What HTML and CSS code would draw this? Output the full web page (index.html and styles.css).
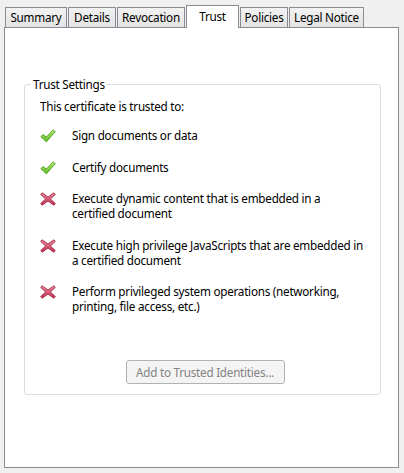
FILE: index.html
```html
<!DOCTYPE html>
<html>
<head>
<meta charset="utf-8">
<link rel="stylesheet" href="styles.css">
</head>
<body>
<div class="dialog">
  <div class="tabs">
    <div class="tab t-summary">Summary</div>
    <div class="tab t-details">Details</div>
    <div class="tab t-revocation">Revocation</div>
    <div class="tab tab-active t-trust">Trust</div>
    <div class="tab t-policies">Policies</div>
    <div class="tab t-legal">Legal Notice</div>
  </div>
  <div class="panel">
    <fieldset class="group">
      <legend class="group-title">Trust Settings</legend>
      <div class="intro">This certificate is trusted to:</div>
      <ul class="perms">
        <li class="perm">
          <svg class="icon" viewBox="0 0 16 14" width="16" height="14">
            <defs>
              <linearGradient id="gchk" x1="0" y1="0" x2="0" y2="1">
                <stop offset="0" stop-color="#bff07a"/>
                <stop offset="1" stop-color="#5cb623"/>
              </linearGradient>
            </defs>
            <path d="M0.8 7.6 L3.4 5.4 L6.2 8.2 L13.2 0.9 L15.3 2.6 L6.4 12.8 Z" fill="url(#gchk)" stroke="#449a18" stroke-width="0.9" stroke-linejoin="round"/>
          </svg>
          <span class="perm-text">Sign documents or data</span>
        </li>
        <li class="perm">
          <svg class="icon" viewBox="0 0 16 14" width="16" height="14">
            <path d="M0.8 7.6 L3.4 5.4 L6.2 8.2 L13.2 0.9 L15.3 2.6 L6.4 12.8 Z" fill="url(#gchk)" stroke="#449a18" stroke-width="0.9" stroke-linejoin="round"/>
          </svg>
          <span class="perm-text">Certify documents</span>
        </li>
        <li class="perm">
          <svg class="icon" viewBox="0 0 16 14" width="16" height="14">
            <defs>
              <linearGradient id="gx" x1="0" y1="0" x2="0" y2="1">
                <stop offset="0" stop-color="#f08aa0"/>
                <stop offset="1" stop-color="#c0304e"/>
              </linearGradient>
            </defs>
            <path d="M2.2 0.8 L8 5 L13.8 0.8 L15.3 2.4 L10.4 7 L15.3 11.6 L13.8 13.2 L8 9 L2.2 13.2 L0.7 11.6 L5.6 7 L0.7 2.4 Z" fill="url(#gx)" stroke="#a02844" stroke-width="0.9" stroke-linejoin="round"/>
          </svg>
          <span class="perm-text">Execute dynamic content that is embedded in a certified document</span>
        </li>
        <li class="perm">
          <svg class="icon" viewBox="0 0 16 14" width="16" height="14">
            <path d="M2.2 0.8 L8 5 L13.8 0.8 L15.3 2.4 L10.4 7 L15.3 11.6 L13.8 13.2 L8 9 L2.2 13.2 L0.7 11.6 L5.6 7 L0.7 2.4 Z" fill="url(#gx)" stroke="#a02844" stroke-width="0.9" stroke-linejoin="round"/>
          </svg>
          <span class="perm-text">Execute high privilege JavaScripts that are embedded in a certified document</span>
        </li>
        <li class="perm">
          <svg class="icon" viewBox="0 0 16 14" width="16" height="14">
            <path d="M2.2 0.8 L8 5 L13.8 0.8 L15.3 2.4 L10.4 7 L15.3 11.6 L13.8 13.2 L8 9 L2.2 13.2 L0.7 11.6 L5.6 7 L0.7 2.4 Z" fill="url(#gx)" stroke="#a02844" stroke-width="0.9" stroke-linejoin="round"/>
          </svg>
          <span class="perm-text">Perform privileged system operations (networking, printing, file access, etc.)</span>
        </li>
      </ul>
      <div class="actions">
        <button class="btn" disabled>Add to Trusted Identities...</button>
      </div>
    </fieldset>
  </div>
</div>
</body>
</html>
```
FILE: styles.css
```css
html, body {
  margin: 0;
  padding: 0;
  background: #f0f0f0;
}
body {
  font-family: "Noto Sans", "DejaVu Sans", sans-serif;
  font-size: 11.7px;
  letter-spacing: -0.25px;
  color: #000;
  width: 404px;
  height: 473px;
  overflow: hidden;
}
.dialog {
  padding: 5px 5px 0 4px;
}
.tabs {
  display: flex;
  align-items: flex-end;
  height: 22px;
  padding-left: 1px;
  position: relative;
  z-index: 1;
}
.tab {
  height: 20px;
  box-sizing: border-box;
  border: 1px solid #898c95;
  border-bottom: none;
  background: linear-gradient(#f2f2f2, #e3e3e3);
  padding: 0;
  line-height: 18px;
  margin-right: 1px;
  text-align: center;
  white-space: nowrap;
}
.t-summary { width: 62px; }
.t-details { width: 48px; }
.t-revocation { width: 68px; }
.t-trust { width: 53px; }
.t-policies { width: 48px; }
.t-legal { width: 75px; }
.tab-active {
  height: 23px;
  background: #fff;
  line-height: 21px;
  margin-bottom: -1px;
}
.panel {
  background: #fff;
  border: 1px solid #898c95;
  height: 441px;
  box-sizing: border-box;
  padding: 48px 17px 0 19px;
}
.group {
  margin: 0;
  border: 1px solid #d5dfe5;
  border-radius: 3px;
  padding: 7px 10px 10px 15px;
  min-width: 0;
}
.group-title {
  padding: 0 2px;
  margin-left: -9px;
}
.intro {
  line-height: 15px;
}
.perms {
  list-style: none;
  margin: 14px 0 0 0;
  padding: 0;
  display: flex;
  flex-direction: column;
  gap: 16.5px;
}
.perm {
  display: flex;
  align-items: flex-start;
  line-height: 15px;
}
.icon {
  flex: 0 0 auto;
  margin-top: 1px;
  margin-right: 16px;
}
.perm-text {
  flex: 1;
  padding-right: 4px;
}
.actions {
  display: flex;
  justify-content: center;
  margin-top: 46px;
}
.btn {
  font-family: inherit;
  font-size: 11.7px;
  letter-spacing: -0.25px;
  color: #838383;
  width: 159px;
  height: 24px;
  border: 1px solid #adb2b5;
  border-radius: 3px;
  background: #f4f4f4;
  padding: 0;
}
```
